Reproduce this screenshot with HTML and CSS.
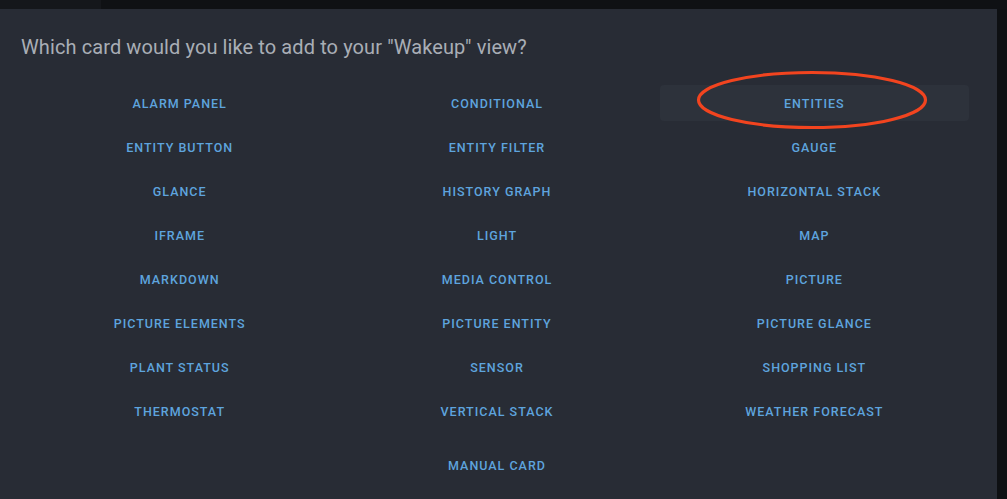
FILE: index.html
```html
<!DOCTYPE html>
<html>
<head>
<meta charset="utf-8">
<link rel="stylesheet" href="styles.css">
</head>
<body>
<div class="topbar"><div class="topbar-left"></div><div class="topbar-right"></div></div>
<div class="main">
  <div class="dialog">
    <h2 class="title">Which card would you like to add to your "Wakeup" view?</h2>
    <div class="grid">
      <button class="card-btn">Alarm panel</button>
      <button class="card-btn">Conditional</button>
      <button class="card-btn active">Entities</button>
      <button class="card-btn">Entity button</button>
      <button class="card-btn">Entity filter</button>
      <button class="card-btn">Gauge</button>
      <button class="card-btn">Glance</button>
      <button class="card-btn">History graph</button>
      <button class="card-btn">Horizontal stack</button>
      <button class="card-btn">iFrame</button>
      <button class="card-btn">Light</button>
      <button class="card-btn">Map</button>
      <button class="card-btn">Markdown</button>
      <button class="card-btn">Media control</button>
      <button class="card-btn">Picture</button>
      <button class="card-btn">Picture elements</button>
      <button class="card-btn">Picture entity</button>
      <button class="card-btn">Picture glance</button>
      <button class="card-btn">Plant status</button>
      <button class="card-btn">Sensor</button>
      <button class="card-btn">Shopping list</button>
      <button class="card-btn">Thermostat</button>
      <button class="card-btn">Vertical stack</button>
      <button class="card-btn">Weather forecast</button>
    </div>
    <div class="manual">
      <button class="card-btn">Manual card</button>
    </div>
    <svg class="annot" width="240" height="64" viewBox="0 0 240 64">
      <ellipse cx="120" cy="32" rx="113.5" ry="27.5" fill="none" stroke="#f2441f" stroke-width="3.2"/>
    </svg>
  </div>
  <div class="side"></div>
</div>
</body>
</html>
```
FILE: styles.css
```css
html, body {
  margin: 0;
  padding: 0;
  background: #0e1013;
  width: 1007px;
  height: 499px;
  overflow: hidden;
  font-family: Roboto, "Liberation Sans", sans-serif;
}
.topbar {
  display: flex;
  height: 9px;
}
.topbar-left {
  width: 101px;
  background: #15171b;
}
.topbar-right {
  flex: 1;
  background: #0f1114;
}
.main {
  display: flex;
  height: 490px;
}
.dialog {
  position: relative;
  width: 997px;
  box-sizing: border-box;
  background: #282c35;
  padding: 0 24px 0 21px;
}
.side {
  flex: 1;
  background: #0e1013;
}
.title {
  margin: 0;
  padding-top: 26px;
  height: 48px;
  box-sizing: border-box;
  font-size: 20px;
  line-height: 24px;
  font-weight: 400;
  color: #a9aeb6;
  letter-spacing: 0.1px;
}
.grid {
  display: grid;
  grid-template-columns: repeat(3, 1fr);
  grid-auto-rows: 44px;
  padding-top: 24px;
}
.card-btn {
  margin: 4px 4px;
  height: 36px;
  border: none;
  border-radius: 4px;
  background: transparent;
  color: #5ea4de;
  font-family: Roboto, "Liberation Sans", sans-serif;
  font-weight: 500;
  font-size: 12.5px;
  letter-spacing: 1px;
  text-transform: uppercase;
  padding: 0;
}
.card-btn.active {
  background: #2d323b;
}
.manual {
  display: flex;
  justify-content: center;
  padding-top: 10px;
}
.manual .card-btn {
  width: 309px;
}
.annot {
  position: absolute;
  left: 692px;
  top: 59px;
}
```
